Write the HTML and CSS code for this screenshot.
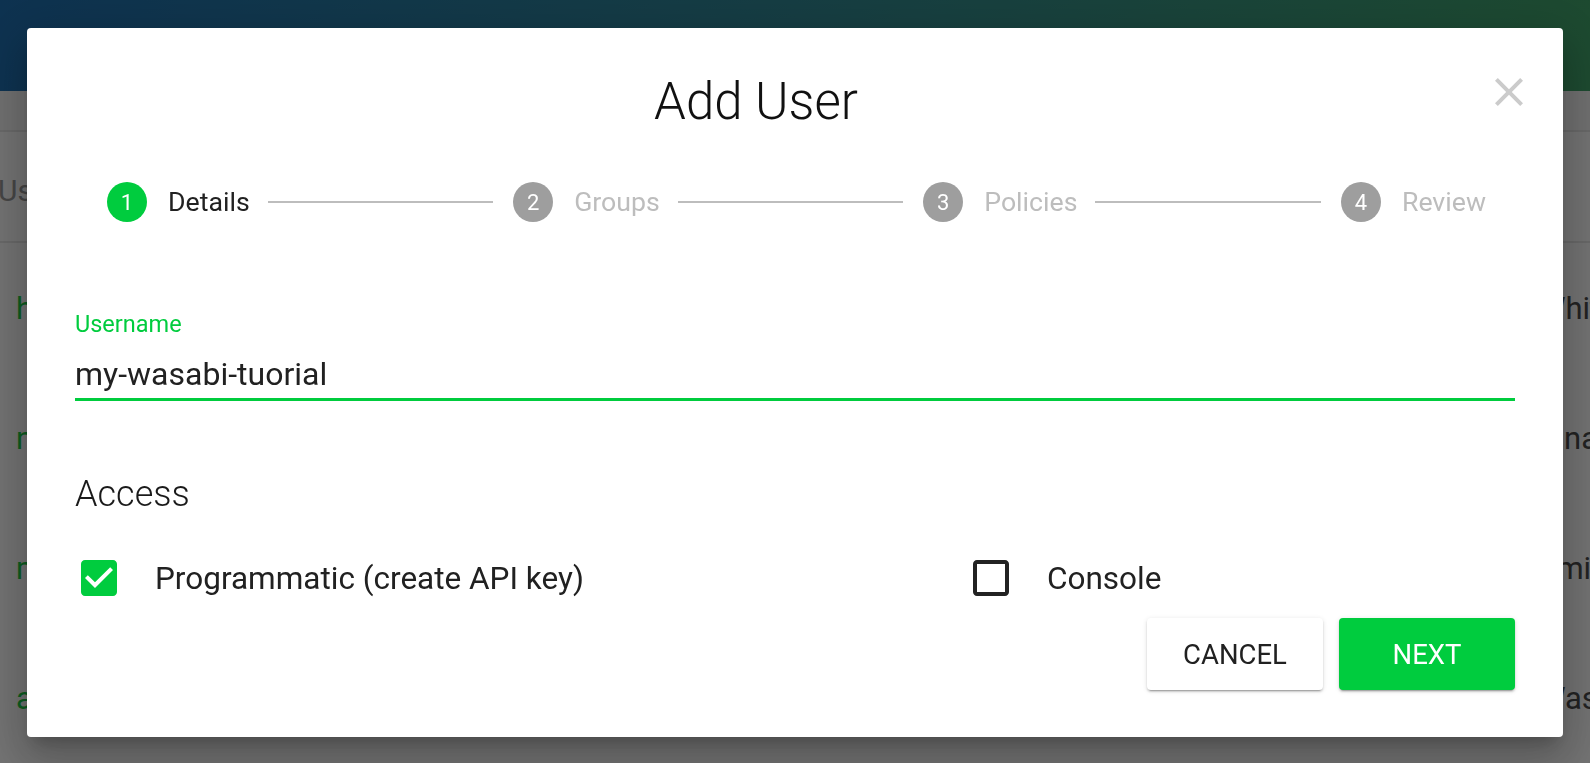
FILE: index.html
```html
<!DOCTYPE html>
<html lang="en">
<head>
    <meta charset="UTF-8">
    <meta name="viewport" content="width=device-width, initial-scale=1.0">
    <title>Add User</title>
    <link rel="stylesheet" href="styles.css">
</head>
<body>
    <div class="page">
        <header class="topbar"></header>
        <div class="toolbar"></div>
        <div class="user-table">
            <div class="table-head"><span>Users</span></div>
            <div class="table-row"><span class="user-name">hannah</span><span class="user-desc">Whitney</span></div>
            <div class="table-row"><span class="user-name">nick</span><span class="user-desc">Tina</span></div>
            <div class="table-row"><span class="user-name">mark</span><span class="user-desc">Smith</span></div>
            <div class="table-row"><span class="user-name">alex</span><span class="user-desc">Wasabi</span></div>
        </div>
    </div>

    <div class="backdrop">
        <section class="dialog">
            <div class="dialog-head">
                <h2 class="dialog-title">Add User</h2>
                <button class="close-btn" aria-label="close">
                    <svg viewBox="0 0 24 24" width="48" height="48">
                        <path d="M19 6.41L17.59 5 12 10.59 6.41 5 5 6.41 10.59 12 5 17.59 6.41 19 12 13.41 17.59 19 19 17.59 13.41 12z"/>
                    </svg>
                </button>
            </div>

            <ol class="stepper">
                <li class="step active"><span class="step-num">1</span><span class="step-label">Details</span></li>
                <li class="connector"></li>
                <li class="step"><span class="step-num">2</span><span class="step-label">Groups</span></li>
                <li class="connector"></li>
                <li class="step"><span class="step-num">3</span><span class="step-label">Policies</span></li>
                <li class="connector"></li>
                <li class="step"><span class="step-num">4</span><span class="step-label">Review</span></li>
            </ol>

            <div class="field">
                <label class="field-label" for="username">Username</label>
                <input class="field-input" id="username" type="text" value="my-wasabi-tuorial">
            </div>

            <h3 class="section-title">Access</h3>

            <div class="access-options">
                <label class="check">
                    <svg class="check-box on" viewBox="0 0 24 24" width="48" height="48">
                        <path d="M19 3H5c-1.11 0-2 .9-2 2v14c0 1.1.89 2 2 2h14c1.11 0 2-.9 2-2V5c0-1.1-.89-2-2-2zm-9 14l-5-5 1.41-1.41L10 14.17l7.59-7.59L19 8l-9 9z"/>
                    </svg>
                    <span>Programmatic (create API key)</span>
                </label>
                <label class="check">
                    <svg class="check-box" viewBox="0 0 24 24" width="48" height="48">
                        <path d="M19 5v14H5V5h14m0-2H5c-1.1 0-2 .9-2 2v14c0 1.1.9 2 2 2h14c1.1 0 2-.9 2-2V5c0-1.1-.9-2-2-2z"/>
                    </svg>
                    <span>Console</span>
                </label>
            </div>

            <div class="actions">
                <button class="btn btn-plain">Cancel</button>
                <button class="btn btn-green">Next</button>
            </div>
        </section>
    </div>
</body>
</html>
```

FILE: styles.css
```css
:root {
  --clr-green: #00cc3e;
  --clr-text: #212121;
  --clr-grey: #9e9e9e;
  --clr-grey-light: #bdbdbd;
  --radius: 4px;
}

*,
::after,
::before {
  margin: 0;
  padding: 0;
  box-sizing: border-box;
}

body {
  font-family: Roboto, "Liberation Sans", sans-serif;
  color: var(--clr-text);
  overflow: hidden;
  height: 100vh;
}

/* page behind the dialog */
.page {
  height: 100vh;
  background: #e4e4e4;
}

.topbar {
  height: 91px;
  background: linear-gradient(90deg, #1b64a0 0%, #2c7a86 50%, #3a9460 100%);
}

.toolbar {
  height: 41px;
  background: #dedede;
  border-bottom: 2px solid #cfcfcf;
}

.table-head {
  height: 111px;
  display: flex;
  align-items: center;
  border-bottom: 2px solid #cfcfcf;
  font-size: 30px;
  color: #8a8a8a;
  padding-top: 8px;
  margin-left: -2px;
}

.table-row {
  height: 130px;
  display: grid;
  grid-template-columns: 1538px 1fr;
  align-items: center;
  font-size: 31px;
  white-space: nowrap;
  overflow: hidden;
}

.user-name {
  color: #17b83f;
  padding-left: 16px;
}

.user-desc {
  color: #444;
}

/* dialog */
.backdrop {
  position: fixed;
  inset: 0;
  background: rgba(0, 0, 0, 0.5);
  padding: 28px 27px 0;
}

.dialog {
  background: #fff;
  border-radius: var(--radius);
  padding: 44px 48px 47px;
  box-shadow: 0 11px 15px -7px rgba(0, 0, 0, 0.2),
    0 24px 38px 3px rgba(0, 0, 0, 0.14),
    0 9px 46px 8px rgba(0, 0, 0, 0.12);
}

.dialog-head {
  display: flex;
  align-items: flex-start;
}

.dialog-title {
  flex: 1;
  text-align: center;
  font-size: 51px;
  font-weight: 300;
  line-height: 60px;
  color: #111;
}

.close-btn {
  width: 86px;
  height: 48px;
  margin-right: -8px;
  margin-top: -4px;
  border: 0;
  background: none;
  display: flex;
  justify-content: flex-end;
  cursor: pointer;
}

.close-btn svg {
  fill: #cbcbcb;
  margin-right: -10px;
}

/* stepper */
.stepper {
  list-style: none;
  display: flex;
  align-items: center;
  margin-top: 50px;
  padding: 0 29px 0 32px;
  height: 40px;
}

.step {
  display: flex;
  align-items: center;
  gap: 21px;
}

.step-num {
  width: 40px;
  height: 40px;
  border-radius: 50%;
  background: var(--clr-grey);
  color: #fff;
  display: grid;
  place-items: center;
  font-size: 22px;
}

.step-label {
  font-size: 26.7px;
  color: var(--clr-grey-light);
}

.step.active .step-num {
  background: var(--clr-green);
}

.step.active .step-label {
  color: var(--clr-text);
}

.connector {
  flex: 1;
  height: 2px;
  background: var(--clr-grey-light);
  margin: 0 20px 0 18px;
}

/* username field */
.field {
  margin-top: 90px;
}

.field-label {
  display: block;
  font-size: 23.5px;
  line-height: 24px;
  color: var(--clr-green);
}

.field-input {
  display: block;
  width: 100%;
  margin-top: 19px;
  height: 38px;
  padding: 0 0 5px;
  border: 0;
  border-bottom: 3px solid var(--clr-green);
  outline: none;
  font-family: inherit;
  font-size: 32px;
  line-height: 38px;
  color: var(--clr-text);
  background: transparent;
  box-sizing: content-box;
}

.section-title {
  margin-top: 72px;
  font-size: 36px;
  font-weight: 300;
  line-height: 43px;
  color: #1a1a1a;
}

/* checkboxes */
.access-options {
  margin-top: 38px;
  display: grid;
  grid-template-columns: 892px 1fr;
}

.check {
  display: flex;
  align-items: center;
  gap: 32px;
  font-size: 31.5px;
  height: 48px;
}

.check-box {
  fill: #222;
  flex-shrink: 0;
}

.check-box.on {
  fill: var(--clr-green);
}

/* buttons */
.actions {
  margin-top: 16px;
  display: flex;
  justify-content: flex-end;
  gap: 16px;
}

.btn {
  width: 176px;
  height: 72px;
  border: 0;
  border-radius: var(--radius);
  font-family: inherit;
  font-size: 27.5px;
  text-transform: uppercase;
  cursor: pointer;
  box-shadow: 0 3px 1px -2px rgba(0, 0, 0, 0.2),
    0 2px 2px 0 rgba(0, 0, 0, 0.14),
    0 1px 5px 0 rgba(0, 0, 0, 0.12);
}

.btn-plain {
  background: #fff;
  color: var(--clr-text);
}

.btn-green {
  background: var(--clr-green);
  color: #fff;
}
```
